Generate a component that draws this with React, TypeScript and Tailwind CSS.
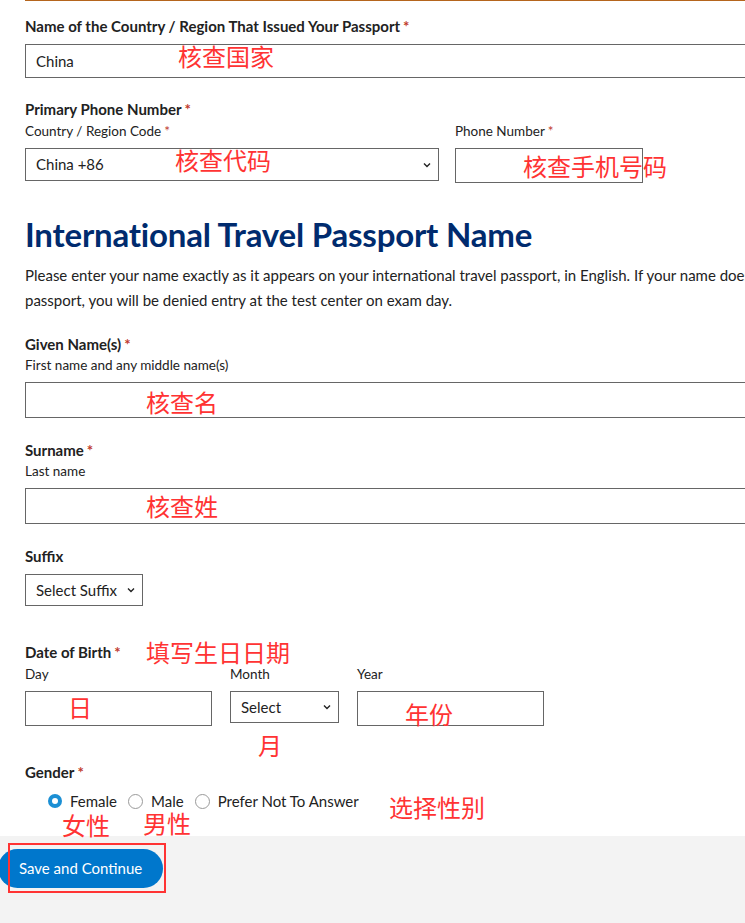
import React from "react";

const lato = { fontFamily: "Lato, 'Noto Sans', sans-serif" };

function Req() {
  return <span className="text-[#c0392b] ml-[3px]">*</span>;
}

function Chevron() {
  return (
    <svg width="8" height="6" viewBox="0 0 8 6" className="absolute right-[7px] top-1/2 -translate-y-1/2">
      <path d="M1 1.5 L4 4.5 L7 1.5" fill="none" stroke="#222" strokeWidth="1.4" />
    </svg>
  );
}

function Select({ value, className }: { value: string; className: string }) {
  return (
    <div className={`relative border border-[#666] bg-white flex items-center pl-[10px] text-[15px] text-[#222] ${className}`}>
      {value}
      <Chevron />
    </div>
  );
}

function Radio({ checked, label }: { checked?: boolean; label: string }) {
  return (
    <div className="flex items-center gap-[8px]">
      {checked ? (
        <span className="w-[14px] h-[14px] rounded-full bg-[#1b8fd4] flex items-center justify-center">
          <span className="w-[6px] h-[6px] rounded-full bg-white" />
        </span>
      ) : (
        <span className="w-[15px] h-[15px] rounded-full border border-[#9a9a9a] bg-white" />
      )}
      <span className="text-[15px] text-[#222]">{label}</span>
    </div>
  );
}

const notes = [
  { text: "核查国家", left: 178, top: 44 },
  { text: "核查代码", left: 175, top: 148 },
  { text: "核查手机号码", left: 523, top: 154 },
  { text: "核查名", left: 146, top: 390 },
  { text: "核查姓", left: 146, top: 494 },
  { text: "填写生日日期", left: 146, top: 640 },
  { text: "日", left: 68, top: 695 },
  { text: "年份", left: 405, top: 702 },
  { text: "月", left: 258, top: 733 },
  { text: "女性", left: 62, top: 813 },
  { text: "男性", left: 143, top: 811 },
  { text: "选择性别", left: 389, top: 795 },
];

export default function App() {
  return (
    <div className="relative w-full min-h-[923px] bg-white overflow-hidden flex flex-col" style={lato}>
      <div className="pl-[25px] w-[1000px]">
        <div className="border-t border-[#b5651d] pt-[15px]">
          {/* passport country */}
          <div className="text-[15px] leading-[20px] font-bold text-[#222]">
            Name of the Country / Region That Issued Your Passport<Req />
          </div>
          <div className="mt-[8px] h-[34px] w-[760px] border border-[#666] flex items-center pl-[10px] text-[15px] text-[#222]">
            China
          </div>

          {/* phone */}
          <div className="mt-[21px] text-[15px] leading-[20px] font-bold text-[#222]">
            Primary Phone Number<Req />
          </div>
          <div className="flex gap-[16px] mt-[3px]">
            <div>
              <div className="text-[13.5px] leading-[18px] text-[#222]">
                Country / Region Code<Req />
              </div>
              <Select value="China +86" className="mt-[8px] w-[414px] h-[33px]" />
            </div>
            <div>
              <div className="text-[13.5px] leading-[18px] text-[#222]">
                Phone Number<Req />
              </div>
              <div className="mt-[8px] w-[188px] h-[35px] border border-[#666]" />
            </div>
          </div>

          {/* passport name */}
          <h1 className="mt-[31px] text-[33px] leading-[40px] font-bold text-[#002b6e] tracking-[-0.2px]">
            International Travel Passport Name
          </h1>
          <p className="mt-[9px] text-[15px] leading-[25px] text-[#222]">
            Please enter your name exactly as it appears on your international travel passport, in English. If your name does not match your international travel
            <br />
            passport, you will be denied entry at the test center on exam day.
          </p>

          <div className="mt-[21px] text-[15px] leading-[20px] font-bold text-[#222]">
            Given Name(s)<Req />
          </div>
          <div className="mt-[2px] text-[13.5px] leading-[18px] text-[#222]">First name and any middle name(s)</div>
          <div className="mt-[8px] h-[36px] w-[760px] border border-[#666]" />

          <div className="mt-[22px] text-[15px] leading-[20px] font-bold text-[#222]">
            Surname<Req />
          </div>
          <div className="mt-[2px] text-[13.5px] leading-[18px] text-[#222]">Last name</div>
          <div className="mt-[8px] h-[36px] w-[760px] border border-[#666]" />

          <div className="mt-[22px] text-[15px] leading-[20px] font-bold text-[#222]">Suffix</div>
          <Select value="Select Suffix" className="mt-[8px] w-[118px] h-[32px]" />

          {/* date of birth */}
          <div className="mt-[36px] text-[15px] leading-[20px] font-bold text-[#222]">
            Date of Birth<Req />
          </div>
          <div className="flex gap-[18px] mt-[3px]">
            <div>
              <div className="text-[13.5px] leading-[18px] text-[#222]">Day</div>
              <div className="mt-[8px] w-[187px] h-[35px] border border-[#666]" />
            </div>
            <div>
              <div className="text-[13.5px] leading-[18px] text-[#222]">Month</div>
              <Select value="Select" className="mt-[8px] w-[109px] h-[32px]" />
            </div>
            <div>
              <div className="text-[13.5px] leading-[18px] text-[#222]">Year</div>
              <div className="mt-[8px] w-[187px] h-[35px] border border-[#666]" />
            </div>
          </div>

          {/* gender */}
          <div className="mt-[36px] text-[15px] leading-[20px] font-bold text-[#222]">
            Gender<Req />
          </div>
          <div className="flex items-center gap-[11px] pl-[23px] mt-[9px] h-[20px]">
            <Radio checked label="Female" />
            <Radio label="Male" />
            <Radio label="Prefer Not To Answer" />
          </div>
        </div>
      </div>

      {/* footer */}
      <div className="mt-[25px] flex-1 bg-[#f3f3f3] pt-[13px]">
        <button className="ml-[-2px] h-[39px] px-[21px] rounded-full bg-[#0077cc] text-white text-[15px]">
          Save and Continue
        </button>
      </div>

      {/* annotations */}
      <div className="absolute left-[8px] top-[843px] w-[158px] h-[50px] border-2 border-[#ff3333]" />
      {notes.map((n) => (
        <span
          key={n.text + n.left}
          className="absolute text-[24px] leading-[24px] text-[#ff3333] whitespace-nowrap"
          style={{ left: n.left, top: n.top, fontFamily: "'Noto Sans CJK SC', sans-serif" }}
        >
          {n.text}
        </span>
      ))}
    </div>
  );
}
